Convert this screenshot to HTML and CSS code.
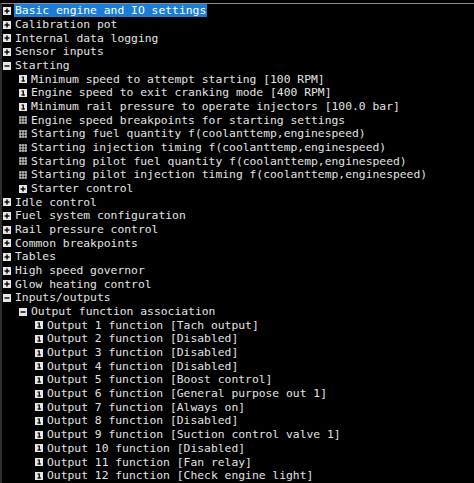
FILE: index.html
```html
<!DOCTYPE html>
<html>
<head>
<meta charset="utf-8">
<link rel="stylesheet" href="styles.css">
</head>
<body>
<svg class="defs" width="0" height="0" aria-hidden="true">
  <defs>
    <symbol id="plus" viewBox="0 0 8 8"><rect x="0" y="0" width="8" height="8" fill="#e6e6e6"/><rect x="1.5" y="3.3" width="5" height="1.4" fill="#000"/><rect x="3.3" y="1.5" width="1.4" height="5" fill="#000"/></symbol>
    <symbol id="minus" viewBox="0 0 8 8"><rect x="0" y="0" width="8" height="8" fill="#e6e6e6"/><rect x="1.5" y="3.3" width="5" height="1.4" fill="#000"/></symbol>
    <symbol id="leaf" viewBox="0 0 8 8"><rect x="0" y="0" width="8" height="8" fill="#e6e6e6"/><rect x="3.6" y="1.5" width="1.3" height="5" fill="#000"/><rect x="2.6" y="1.5" width="1.2" height="1.2" fill="#000"/><rect x="2.4" y="5.4" width="3.6" height="1.1" fill="#000"/></symbol>
    <symbol id="table" viewBox="0 0 8 8"><g fill="#bdbdbd"><rect x="0" y="0.5" width="8" height="1.2"/><rect x="0" y="3.4" width="8" height="1.2"/><rect x="0" y="6.3" width="8" height="1.2"/><rect x="0.5" y="0" width="1.2" height="8"/><rect x="3.4" y="0" width="1.2" height="8"/><rect x="6.3" y="0" width="1.2" height="8"/></g></symbol>
  </defs>
</svg>
<div class="tree">
  <div class="row l0"><svg class="ic"><use href="#plus"/></svg><span class="lbl sel">Basic engine and IO settings</span></div>
  <div class="row l0"><svg class="ic"><use href="#plus"/></svg><span class="lbl">Calibration pot</span></div>
  <div class="row l0"><svg class="ic"><use href="#plus"/></svg><span class="lbl">Internal data logging</span></div>
  <div class="row l0"><svg class="ic"><use href="#plus"/></svg><span class="lbl">Sensor inputs</span></div>
  <div class="row l0"><svg class="ic"><use href="#minus"/></svg><span class="lbl">Starting</span></div>
  <div class="row l1"><svg class="ic"><use href="#leaf"/></svg><span class="lbl">Minimum speed to attempt starting [100 RPM]</span></div>
  <div class="row l1"><svg class="ic"><use href="#leaf"/></svg><span class="lbl">Engine speed to exit cranking mode [400 RPM]</span></div>
  <div class="row l1"><svg class="ic"><use href="#leaf"/></svg><span class="lbl">Minimum rail pressure to operate injectors [100.0 bar]</span></div>
  <div class="row l1"><svg class="ic"><use href="#table"/></svg><span class="lbl">Engine speed breakpoints for starting settings</span></div>
  <div class="row l1"><svg class="ic"><use href="#table"/></svg><span class="lbl">Starting fuel quantity f(coolanttemp,enginespeed)</span></div>
  <div class="row l1"><svg class="ic"><use href="#table"/></svg><span class="lbl">Starting injection timing f(coolanttemp,enginespeed)</span></div>
  <div class="row l1"><svg class="ic"><use href="#table"/></svg><span class="lbl">Starting pilot fuel quantity f(coolanttemp,enginespeed)</span></div>
  <div class="row l1"><svg class="ic"><use href="#table"/></svg><span class="lbl">Starting pilot injection timing f(coolanttemp,enginespeed)</span></div>
  <div class="row l1"><svg class="ic"><use href="#plus"/></svg><span class="lbl">Starter control</span></div>
  <div class="row l0"><svg class="ic"><use href="#plus"/></svg><span class="lbl">Idle control</span></div>
  <div class="row l0"><svg class="ic"><use href="#plus"/></svg><span class="lbl">Fuel system configuration</span></div>
  <div class="row l0"><svg class="ic"><use href="#plus"/></svg><span class="lbl">Rail pressure control</span></div>
  <div class="row l0"><svg class="ic"><use href="#plus"/></svg><span class="lbl">Common breakpoints</span></div>
  <div class="row l0"><svg class="ic"><use href="#plus"/></svg><span class="lbl">Tables</span></div>
  <div class="row l0"><svg class="ic"><use href="#plus"/></svg><span class="lbl">High speed governor</span></div>
  <div class="row l0"><svg class="ic"><use href="#plus"/></svg><span class="lbl">Glow heating control</span></div>
  <div class="row l0"><svg class="ic"><use href="#minus"/></svg><span class="lbl">Inputs/outputs</span></div>
  <div class="row l1"><svg class="ic"><use href="#minus"/></svg><span class="lbl">Output function association</span></div>
  <div class="row l2"><svg class="ic"><use href="#leaf"/></svg><span class="lbl">Output 1 function [Tach output]</span></div>
  <div class="row l2"><svg class="ic"><use href="#leaf"/></svg><span class="lbl">Output 2 function [Disabled]</span></div>
  <div class="row l2"><svg class="ic"><use href="#leaf"/></svg><span class="lbl">Output 3 function [Disabled]</span></div>
  <div class="row l2"><svg class="ic"><use href="#leaf"/></svg><span class="lbl">Output 4 function [Disabled]</span></div>
  <div class="row l2"><svg class="ic"><use href="#leaf"/></svg><span class="lbl">Output 5 function [Boost control]</span></div>
  <div class="row l2"><svg class="ic"><use href="#leaf"/></svg><span class="lbl">Output 6 function [General purpose out 1]</span></div>
  <div class="row l2"><svg class="ic"><use href="#leaf"/></svg><span class="lbl">Output 7 function [Always on]</span></div>
  <div class="row l2"><svg class="ic"><use href="#leaf"/></svg><span class="lbl">Output 8 function [Disabled]</span></div>
  <div class="row l2"><svg class="ic"><use href="#leaf"/></svg><span class="lbl">Output 9 function [Suction control valve 1]</span></div>
  <div class="row l2"><svg class="ic"><use href="#leaf"/></svg><span class="lbl">Output 10 function [Disabled]</span></div>
  <div class="row l2"><svg class="ic"><use href="#leaf"/></svg><span class="lbl">Output 11 function [Fan relay]</span></div>
  <div class="row l2"><svg class="ic"><use href="#leaf"/></svg><span class="lbl">Output 12 function [Check engine light]</span></div>
</div>
</body>
</html>
```

FILE: styles.css
```css
html, body {
  margin: 0;
  padding: 0;
  background: #000;
  height: 100%;
  overflow: hidden;
}
body {
  padding-top: 3px;
  box-sizing: border-box;
}
.defs {
  position: absolute;
  width: 0;
  height: 0;
}
.tree {
  border-top: 1px solid #8c8c8c;
  border-left: 2px solid #2e2e2e;
  height: 100%;
  font-family: "DejaVu Sans Mono", "Liberation Mono", monospace;
  font-size: 11.35px;
  color: #e2e2e2;
}
.row {
  display: flex;
  align-items: center;
  height: 13.68px;
  white-space: nowrap;
}
.l0 { padding-left: 1px; }
.l1 { padding-left: 17px; }
.l2 { padding-left: 33px; }
.ic {
  width: 8px;
  height: 8px;
  flex: none;
  margin-right: 4px;
}
.lbl {
  line-height: 13px;
}
.sel {
  background: #1a7ed8;
  color: #fff;
  margin-left: -1px;
  padding: 0 1px;
}
```
